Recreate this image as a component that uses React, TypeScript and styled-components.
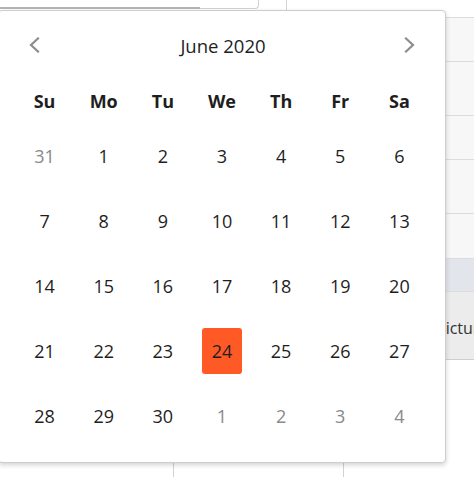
import React from "react";
import styled, { createGlobalStyle } from "styled-components";

const Global = createGlobalStyle`
  html, body { margin: 0; padding: 0; background: #fff; }
  body { font-family: "Open Sans", "Liberation Sans", sans-serif; }
`;

const Page = styled.div`
  position: relative;
  width: 474px;
  height: 477px;
  overflow: hidden;
  display: grid;
  grid-template-columns: 446px 28px;
`;

const LeftArea = styled.div`
  display: flex;
  flex-direction: column;
  justify-content: space-between;
`;

const TopStrip = styled.div`
  display: flex;
  height: 11px;
`;

const InputBox = styled.div`
  width: 258px;
  height: 8px;
  border-bottom: 1px solid #d2d2d2;
  border-right: 1px solid #d2d2d2;
  border-bottom-right-radius: 4px;
`;

const InputFill = styled.div`
  width: 200px;
  height: 7px;
  border-bottom: 2px solid #b4b4b4;
`;

const ColLine = styled.div<{ $gap: number }>`
  margin-left: ${(p) => p.$gap}px;
  width: 1px;
  height: 100%;
  background: #d2d2d2;
`;

const BottomStrip = styled.div`
  display: flex;
  height: 15px;
`;

const RightTable = styled.div`
  display: flex;
  flex-direction: column;
  padding-top: 17px;
`;

const TRow = styled.div<{ $h: number; $bg: string }>`
  height: ${(p) => p.$h}px;
  background: ${(p) => p.$bg};
  border-top: 1px solid #dcdcdc;
  box-sizing: border-box;
  overflow: hidden;
  white-space: nowrap;
  display: flex;
  align-items: center;
  font-size: 16px;
  color: #333;
`;

const RowText = styled.span`
  margin-left: -10px;
  margin-top: 4px;
`;

const TEnd = styled.div`
  border-top: 1px solid #cfcfcf;
`;

const Popup = styled.div`
  position: absolute;
  left: -2px;
  top: 10px;
  width: 448px;
  height: 453px;
  box-sizing: border-box;
  background: #fff;
  border: 1px solid #cdcdcd;
  border-radius: 4px;
  box-shadow: 0 2px 5px rgba(0, 0, 0, 0.18);
  padding: 12px 16px 14px 16px;
  display: flex;
  flex-direction: column;
  color: #1e1e1e;
`;

const Header = styled.div`
  height: 44px;
  display: flex;
  align-items: center;
  justify-content: space-between;
  margin-bottom: 12px;
  padding: 0 12px;
`;

const NavButton = styled.button`
  border: 0;
  background: none;
  padding: 0;
  width: 14px;
  height: 18px;
  display: flex;
  align-items: center;
  justify-content: center;
  cursor: pointer;
`;

const Title = styled.div`
  font-size: 18.5px;
  color: #1e1e1e;
  margin-left: 2px;
`;

const Grid = styled.div`
  display: grid;
  grid-template-columns: repeat(7, 1fr);
`;

const WeekDay = styled.div`
  height: 44px;
  display: flex;
  align-items: center;
  justify-content: center;
  font-weight: 700;
  font-size: 18px;
  color: #1e1e1e;
`;

const Cell = styled.div`
  height: 65px;
  display: flex;
  align-items: center;
  justify-content: center;
`;

const Day = styled.div<{ $muted?: boolean; $selected?: boolean }>`
  width: 40px;
  height: 46px;
  border-radius: 3px;
  display: flex;
  align-items: center;
  justify-content: center;
  font-size: 18px;
  color: ${(p) => (p.$muted ? "#8a8a8a" : "#1e1e1e")};
  background: ${(p) => (p.$selected ? "#ff5a26" : "transparent")};
`;

const Chevron = ({ dir }: { dir: "left" | "right" }) => (
  <svg width="12" height="16" viewBox="0 0 12 16" fill="none">
    <path
      d={dir === "left" ? "M10 1.5 L3 8 L10 14.5" : "M2 1.5 L9 8 L2 14.5"}
      stroke="#8c8c8c"
      strokeWidth="2.2"
      strokeLinecap="square"
    />
  </svg>
);

const weekdays = ["Su", "Mo", "Tu", "We", "Th", "Fr", "Sa"];

const days: { d: number; muted?: boolean }[] = [
  { d: 31, muted: true },
  ...Array.from({ length: 30 }, (_, i) => ({ d: i + 1 })),
  { d: 1, muted: true },
  { d: 2, muted: true },
  { d: 3, muted: true },
  { d: 4, muted: true },
];

export default function App() {
  return (
    <>
      <Global />
      <Page>
        <LeftArea>
          <TopStrip>
            <InputBox>
              <InputFill />
            </InputBox>
            <ColLine $gap={27} />
          </TopStrip>
          <BottomStrip>
            <ColLine $gap={173} />
            <ColLine $gap={169} />
          </BottomStrip>
        </LeftArea>
        <RightTable>
          <TRow $h={44} $bg="#f7f7f7" />
          <TRow $h={54} $bg="#f7f7f7" />
          <TRow $h={44} $bg="#f7f7f7" />
          <TRow $h={54} $bg="#f7f7f7" />
          <TRow $h={45} $bg="#f7f7f7" />
          <TRow $h={33} $bg="#e2e6ec" />
          <TRow $h={68} $bg="#ececec">
            <RowText>Pictures</RowText>
          </TRow>
          <TEnd />
        </RightTable>
        <Popup>
          <Header>
            <NavButton aria-label="Previous month">
              <Chevron dir="left" />
            </NavButton>
            <Title>June 2020</Title>
            <NavButton aria-label="Next month">
              <Chevron dir="right" />
            </NavButton>
          </Header>
          <Grid>
            {weekdays.map((w) => (
              <WeekDay key={w}>{w}</WeekDay>
            ))}
            {days.map((x, i) => (
              <Cell key={i}>
                <Day $muted={x.muted} $selected={!x.muted && x.d === 24}>
                  {x.d}
                </Day>
              </Cell>
            ))}
          </Grid>
        </Popup>
      </Page>
    </>
  );
}
